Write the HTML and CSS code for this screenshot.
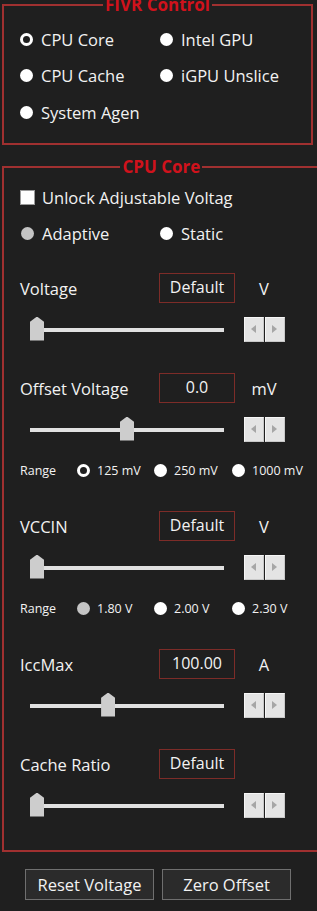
FILE: index.html
```html
<!DOCTYPE html>
<html lang="en">

<head>
    <meta charset="UTF-8">
    <meta name="viewport" content="width=device-width, initial-scale=1.0">
    <title>FIVR Control</title>
    <link rel="stylesheet" href="styles.css">
</head>

<body>
    <fieldset class="group fivr">
        <legend>FIVR Control</legend>
        <div class="plane_grid">
            <label class="radio"><input type="radio" name="plane" checked><span>CPU Core</span></label>
            <label class="radio"><input type="radio" name="plane"><span>Intel GPU</span></label>
            <label class="radio"><input type="radio" name="plane"><span>CPU Cache</span></label>
            <label class="radio"><input type="radio" name="plane"><span>iGPU Unslice</span></label>
            <label class="radio"><input type="radio" name="plane"><span>System Agen</span></label>
        </div>
    </fieldset>

    <fieldset class="group core">
        <legend>CPU Core</legend>

        <label class="check_row"><input type="checkbox"><span>Unlock Adjustable Voltag</span></label>

        <div class="mode_row">
            <label class="radio"><input type="radio" name="mode" checked disabled><span>Adaptive</span></label>
            <label class="radio"><input type="radio" name="mode"><span>Static</span></label>
        </div>

        <div class="setting">
            <div class="value_row">
                <span class="label">Voltage</span>
                <span class="value_box">Default</span>
                <span class="unit">V</span>
            </div>
            <div class="slider_row">
                <div class="track"><div class="lane"><div class="thumb" style="left: 0%"></div></div></div>
                <div class="spin"><span class="arrow left"></span><span class="arrow right"></span></div>
            </div>
        </div>

        <div class="setting">
            <div class="value_row">
                <span class="label">Offset Voltage</span>
                <span class="value_box">0.0</span>
                <span class="unit">mV</span>
            </div>
            <div class="slider_row">
                <div class="track"><div class="lane"><div class="thumb" style="left: 50%"></div></div></div>
                <div class="spin"><span class="arrow left"></span><span class="arrow right"></span></div>
            </div>
            <div class="range_row">
                <span class="range_label">Range</span>
                <label class="radio small"><input type="radio" name="offset_range" checked><span>125 mV</span></label>
                <label class="radio small"><input type="radio" name="offset_range"><span>250 mV</span></label>
                <label class="radio small"><input type="radio" name="offset_range"><span>1000 mV</span></label>
            </div>
        </div>

        <div class="setting">
            <div class="value_row">
                <span class="label">VCCIN</span>
                <span class="value_box">Default</span>
                <span class="unit">V</span>
            </div>
            <div class="slider_row">
                <div class="track"><div class="lane"><div class="thumb" style="left: 0%"></div></div></div>
                <div class="spin"><span class="arrow left"></span><span class="arrow right"></span></div>
            </div>
            <div class="range_row">
                <span class="range_label">Range</span>
                <label class="radio small"><input type="radio" name="vccin_range" checked disabled><span>1.80 V</span></label>
                <label class="radio small"><input type="radio" name="vccin_range"><span>2.00 V</span></label>
                <label class="radio small"><input type="radio" name="vccin_range"><span>2.30 V</span></label>
            </div>
        </div>

        <div class="setting">
            <div class="value_row">
                <span class="label">IccMax</span>
                <span class="value_box">100.00</span>
                <span class="unit">A</span>
            </div>
            <div class="slider_row">
                <div class="track"><div class="lane"><div class="thumb" style="left: 39.5%"></div></div></div>
                <div class="spin"><span class="arrow left"></span><span class="arrow right"></span></div>
            </div>
        </div>

        <div class="setting">
            <div class="value_row">
                <span class="label">Cache Ratio</span>
                <span class="value_box">Default</span>
                <span class="unit"></span>
            </div>
            <div class="slider_row">
                <div class="track"><div class="lane"><div class="thumb" style="left: 0%"></div></div></div>
                <div class="spin"><span class="arrow left"></span><span class="arrow right"></span></div>
            </div>
        </div>
    </fieldset>

    <div class="buttons">
        <button class="btn">Reset Voltage</button>
        <button class="btn">Zero Offset</button>
    </div>
</body>

</html>
```

FILE: styles.css
```css
* {
    margin: 0;
    padding: 0;
    box-sizing: border-box;
}

body {
    background: #1f1f1f;
    color: #f2f2f2;
    font-family: "Open Sans", "Liberation Sans", sans-serif;
    font-size: 16.5px;
    overflow: hidden;
}

/* group boxes */
.group {
    margin: 0 4px 0 2px;
    border: 2px solid #a03030;
    padding: 0 16px;
}

.group legend {
    margin: 0 auto;
    padding: 0 2px;
    color: #d0121c;
    font-weight: bold;
    font-size: 17px;
    line-height: 22px;
}

.fivr {
    margin-top: -6px;
    padding-top: 13px;
    padding-bottom: 21px;
}

.core {
    margin-top: 11px;
    padding-top: 10px;
    padding-bottom: 32px;
}

/* radios and checkbox */
.radio {
    display: flex;
    align-items: center;
    gap: 8px;
    height: 20px;
    white-space: nowrap;
}

.radio input {
    appearance: none;
    -webkit-appearance: none;
    width: 13px;
    height: 13px;
    border-radius: 50%;
    background: #ffffff;
    flex: none;
}

.radio input:checked {
    background: #1f1f1f;
    border: 3px solid #ffffff;
}

.radio input:disabled {
    background: #c4c4c4;
    border: none;
}

.plane_grid {
    display: grid;
    grid-template-columns: 140px auto;
    row-gap: 16.5px;
}

.check_row {
    display: flex;
    align-items: center;
    gap: 7px;
    height: 18px;
}

.check_row input {
    appearance: none;
    -webkit-appearance: none;
    width: 15px;
    height: 15px;
    background: #ffffff;
    border: 1px solid #9a9a9a;
    flex: none;
}

.mode_row {
    display: grid;
    grid-template-columns: 140px auto;
    margin-top: 17px;
}

.mode_row .radio:first-child input {
    margin-left: 1px;
}

/* settings */
.setting {
    margin-top: 31px;
}

.mode_row + .setting {
    margin-top: 30px;
}

.value_row {
    display: flex;
    align-items: center;
    height: 30px;
}

.label {
    width: 139px;
}

.value_box {
    width: 76px;
    height: 30px;
    border: 1px solid #7d2c28;
    text-align: center;
    font-size: 16px;
    line-height: 26px;
}

.unit {
    width: 58px;
    text-align: center;
}

.slider_row {
    display: flex;
    align-items: center;
    height: 25px;
    margin-top: 14px;
    padding-left: 10px;
}

.track {
    width: 194px;
    height: 4px;
    background: #e0e0e0;
}

.lane {
    position: relative;
    width: calc(100% - 14px);
    height: 100%;
}

.thumb {
    position: absolute;
    top: -11px;
    width: 14px;
    height: 24px;
    background: #cdcdcd;
    clip-path: polygon(50% 0, 100% 22%, 100% 100%, 0 100%, 0 22%);
}

.spin {
    display: flex;
    gap: 1px;
    margin-left: 20px;
}

.arrow {
    position: relative;
    width: 20px;
    height: 25px;
    background: #e4e4e4;
    border-top: 1px solid #f6f6f6;
    border-left: 1px solid #f6f6f6;
    border-bottom: 1px solid #c8c8c8;
    border-right: 1px solid #c8c8c8;
}

.arrow::after {
    content: "";
    position: absolute;
    top: 7px;
    left: 6px;
    border-top: 4px solid transparent;
    border-bottom: 4px solid transparent;
}

.arrow.left::after {
    border-right: 5px solid #a6a6a6;
}

.arrow.right::after {
    border-left: 5px solid #a6a6a6;
}

.range_row {
    display: grid;
    grid-template-columns: 57px 77px 78px auto;
    align-items: center;
    height: 20px;
    margin-top: 18px;
    font-size: 12.5px;
}

.radio.small {
    gap: 7px;
}

/* bottom buttons */
.buttons {
    display: flex;
    justify-content: center;
    gap: 8px;
    margin-top: 17px;
    padding-right: 1px;
}

.btn {
    width: 129px;
    height: 31px;
    background: #2b2b2b;
    border: 1px solid #6f6f6f;
    color: #f2f2f2;
    font-family: inherit;
    font-size: 16.5px;
}
```
